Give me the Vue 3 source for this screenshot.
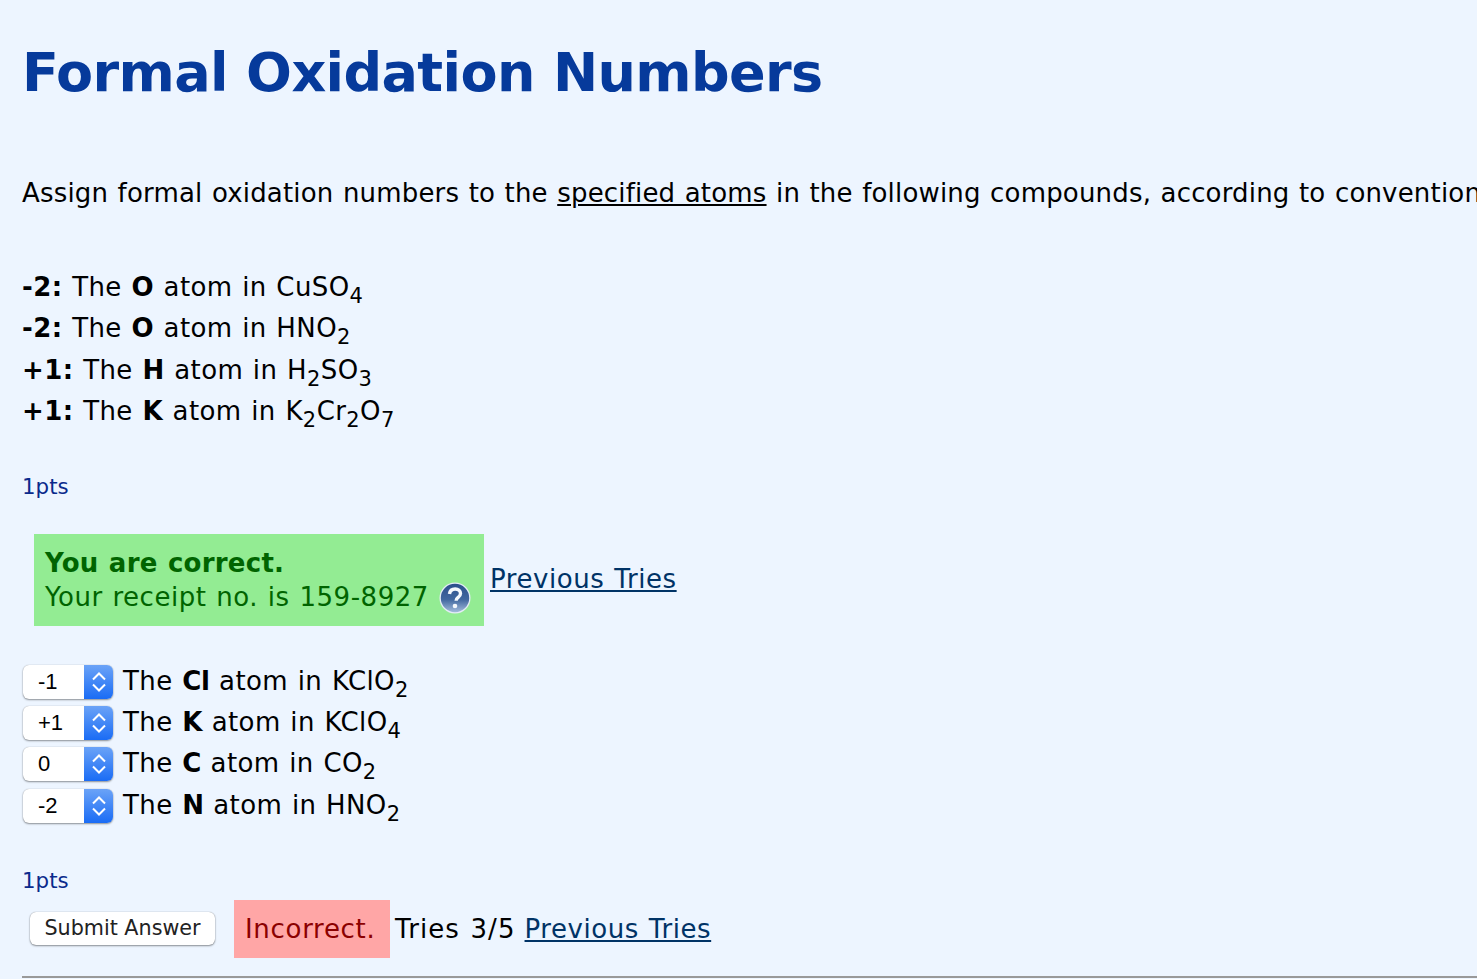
<script setup>
const solved = [
  { ans: '-2:', atom: 'O', parts: ['CuSO', '4'] },
  { ans: '-2:', atom: 'O', parts: ['HNO', '2'] },
  { ans: '+1:', atom: 'H', parts: ['H', '2', 'SO', '3'] },
  { ans: '+1:', atom: 'K', parts: ['K', '2', 'Cr', '2', 'O', '7'] },
]
const rows = [
  { val: '-1', atom: 'Cl', parts: ['KClO', '2'] },
  { val: '+1', atom: 'K', parts: ['KClO', '4'] },
  { val: '0', atom: 'C', parts: ['CO', '2'] },
  { val: '-2', atom: 'N', parts: ['HNO', '2'] },
]
</script>

<template>
  <div class="page">
    <h1 class="title">Formal Oxidation Numbers</h1>
    <p class="intro">Assign formal oxidation numbers to the <u>specified atoms</u> in the following compounds, according to conventions.</p>

    <div class="solved">
      <div v-for="(r, i) in solved" :key="i" class="line">
        <b>{{ r.ans }}</b> The <b>{{ r.atom }}</b> atom in <template v-for="(p, j) in r.parts" :key="j"><sub v-if="j % 2">{{ p }}</sub><span v-else>{{ p }}</span></template>
      </div>
    </div>

    <div class="pts first">1pts</div>

    <div class="result-row">
      <div class="correct">
        <div class="correct-head">You are correct.</div>
        <div class="correct-line">
          <span>Your receipt no. is 159-8927</span>
          <svg class="help" viewBox="0 0 32 32" width="32" height="32" aria-hidden="true">
            <defs>
              <linearGradient id="helpFill" x1="0" y1="0" x2="0" y2="1">
                <stop offset="0" stop-color="#2b4f8c" />
                <stop offset="0.55" stop-color="#41679f" />
                <stop offset="1" stop-color="#a3bbdc" />
              </linearGradient>
              <filter id="helpSoft" x="-20%" y="-20%" width="140%" height="140%">
                <feGaussianBlur stdDeviation="0.5" />
              </filter>
            </defs>
            <circle cx="16" cy="16" r="15.500" fill="#e4ecf6" />
            <circle cx="16" cy="16" r="14.200" fill="url(#helpFill)" />
            <g filter="url(#helpSoft)">
              <path d="M10.500 12c.4-3.200 2.700-5 5.700-5 3.200 0 5.300 1.800 5.300 4.400 0 2.200-1.300 3.300-2.600 4.300-1.200.9-1.800 1.500-1.800 3" fill="none" stroke="#f4f7fc" stroke-width="3.400" />
              <circle cx="16" cy="24" r="2.300" fill="#f4f7fc" />
            </g>
          </svg>
        </div>
      </div>
      <a class="link prev-top" href="#">Previous Tries</a>
    </div>

    <div class="selects">
      <div v-for="(r, i) in rows" :key="i" class="sel-row">
        <div class="select">
          <span class="sel-val">{{ r.val }}</span>
          <span class="sel-btn">
            <svg viewBox="0 0 14 24" width="14" height="24" aria-hidden="true">
              <path d="M1 9.500 7 3.500l6 6M1 14.500l6 6 6-6" fill="none" stroke="#fff" stroke-width="2" />
            </svg>
          </span>
        </div>
        <div class="sel-text">The <b>{{ r.atom }}</b> atom in {{ r.parts[0] }}<sub>{{ r.parts[1] }}</sub></div>
      </div>
    </div>

    <div class="pts second">1pts</div>

    <div class="submit-row">
      <button class="submit" type="button">Submit Answer</button>
      <div class="incorrect">Incorrect.</div>
      <span class="tries">Tries 3/5</span>
      <a class="link" href="#">Previous Tries</a>
    </div>

    <hr class="rule" />
  </div>
</template>

<style scoped>
.page {
  box-sizing: border-box;
  height: 979px;
  overflow: hidden;
  padding: 0 0 0 22px;
  background: #edf5ff;
  font-family: "DejaVu Sans", Verdana, sans-serif;
  font-size: 26px;
  word-spacing: 1px;
  color: #000;
}
.title {
  margin: 0;
  padding-top: 39px;
  font-size: 54px;
  line-height: 68px;
  font-weight: 700;
  letter-spacing: -.62px;
  word-spacing: 0;
  color: #063a9b;
  white-space: nowrap;
}
.intro {
  margin: 0;
  padding-top: 69px;
  line-height: 34px;
  letter-spacing: .18px;
  white-space: nowrap;
}
.solved { padding-top: 57px; letter-spacing: .4px; }
.line { height: 41.3px; line-height: 41px; white-space: nowrap; }
sub { font-size: 21px; line-height: 0; vertical-align: -7px; }
.pts { font-size: 21.300px; line-height: 28px; color: #0a2a8c; letter-spacing: .05px; }
.pts.first { padding-top: 41px; }
.result-row {
  display: flex;
  align-items: center;
  gap: 6px;
  margin: 33px 0 0 12px;
}
.correct {
  box-sizing: border-box;
  width: 450px;
  height: 92px;
  padding: 12px 11px;
  background: #93ec93;
  color: #006400;
  line-height: 34px;
  letter-spacing: .53px;
  white-space: nowrap;
}
.correct-head { font-weight: 700; letter-spacing: .25px; }
.correct-line { display: flex; align-items: center; gap: 10px; }
.help { flex: none; margin-top: 2px; }
.link { color: #003366; text-decoration: underline; white-space: nowrap; letter-spacing: .57px; }
.prev-top { margin-top: -2px; }
.selects { padding-top: 35px; }
.sel-row { display: flex; align-items: center; gap: 10px; height: 41.300px; margin-left: 1px; }
.select {
  box-sizing: border-box;
  display: flex;
  width: 90px;
  height: 34px;
  border-radius: 6px;
  background: #fff;
  box-shadow: 0 1px 2px rgba(0, 0, 0, .4), 0 0 1px rgba(0, 0, 0, .3);
  overflow: hidden;
  font-family: "Liberation Sans", Arial, sans-serif;
  font-size: 22px;
}
.sel-val { flex: 1; padding-left: 15px; line-height: 34px; }
.sel-btn {
  width: 29px;
  display: flex;
  align-items: center;
  justify-content: center;
  background: linear-gradient(#6ba3f7, #1a6cf5);
}
.sel-text { white-space: nowrap; line-height: 34px; letter-spacing: .4px; margin-top: -2px; }
.sel-text b { letter-spacing: -.4px; }
.pts.second { padding-top: 41px; }
.submit-row {
  display: flex;
  align-items: center;
  margin-top: 5px;
  margin-left: 8px;
}
.submit {
  width: 185px;
  height: 33px;
  margin-bottom: 2px;
  padding: 0;
  border: none;
  border-radius: 6px;
  background: #fff;
  box-shadow: 0 1px 2px rgba(0, 0, 0, .4), 0 0 1px rgba(0, 0, 0, .4);
  font-family: inherit;
  font-size: 20.700px;
  word-spacing: 0;
  color: #222;
}
.incorrect {
  box-sizing: border-box;
  width: 156px;
  height: 58px;
  margin: 0 5px 0 19px;
  padding-left: 11px;
  line-height: 58px;
  letter-spacing: .7px;
  background: #ffa6a6;
  color: #8b0000;
  white-space: nowrap;
}
.tries { margin-right: 9px; white-space: nowrap; letter-spacing: 1.1px; }
.rule {
  margin: 18px 0 0;
  height: 2px;
  border: none;
  background: #999;
}
</style>
<style>
html, body { margin: 0; background: #edf5ff; overflow: hidden; }
</style>
